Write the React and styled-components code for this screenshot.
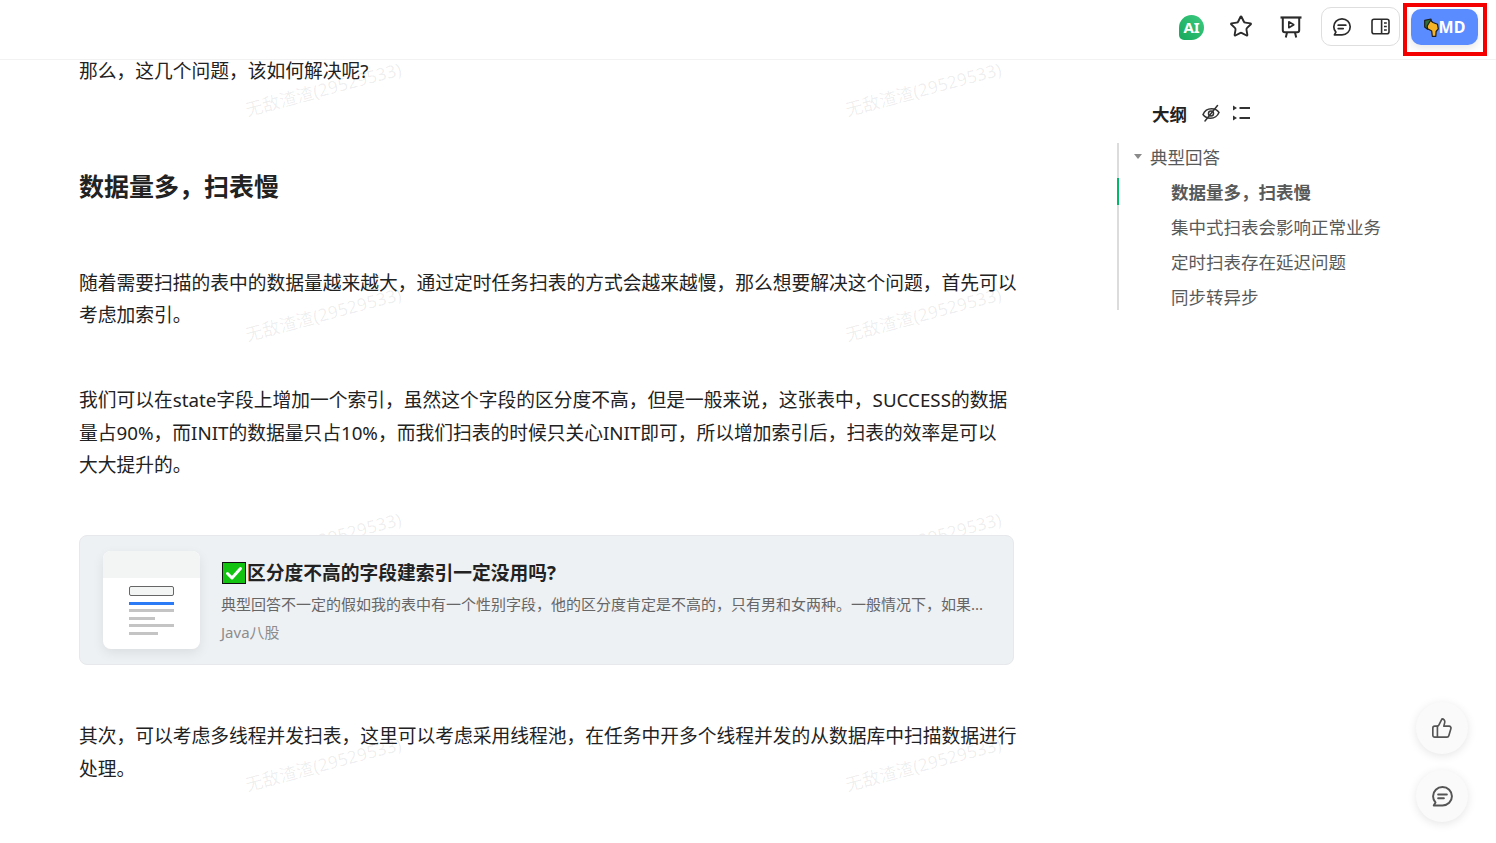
import React from "react";
import styled, { createGlobalStyle } from "styled-components";
import { Star, ThumbsUp } from "lucide-react";

const WATERMARK_COUNT = 8;

const outline = [
  { text: "集中式扫表会影响正常业务" },
  { text: "定时扫表存在延迟问题" },
  { text: "同步转异步" },
];

const BubbleIcon = ({ size = 20, color = "#2b2b2b" }) => (
  <svg width={size} height={size} viewBox="0 0 20 20" fill="none">
    <path
      d="M10 1.8c4.600 0 8.200 3.500 8.200 8s-3.600 8-8.200 8H2.400l1.500-2.600C2.600 13.800 1.800 12 1.800 9.800c0-4.500 3.600-8 8.200-8Z"
      stroke={color}
      strokeWidth="1.700"
      strokeLinejoin="round"
    />
    <path d="M6.200 8.200h7.600M6.200 11.600h5" stroke={color} strokeWidth="1.700" strokeLinecap="round" />
  </svg>
);

const PanelIcon = () => (
  <svg width="19" height="17" viewBox="0 0 19 17" fill="none">
    <rect x="1" y="1.200" width="17" height="14.600" rx="2" stroke="#2b2b2b" strokeWidth="1.600" />
    <path d="M10.600 1.200v14.600" stroke="#2b2b2b" strokeWidth="1.600" />
    <path d="M13 5h2.800M13 8.500h2.800M13 12h2.800" stroke="#2b2b2b" strokeWidth="1.600" />
  </svg>
);

const ScreenIcon = () => (
  <svg width="22" height="22" viewBox="0 0 22 22" fill="none">
    <path d="M.5 1.500h21" stroke="#2b2b2b" strokeWidth="2.200" />
    <path d="M2.800 1.500v12.700c0 1.200.8 2 2 2h12.400c1.200 0 2-.8 2-2V1.500" stroke="#2b2b2b" strokeWidth="2" />
    <path d="M8.800 5.800v6l5-3-5-3Z" stroke="#2b2b2b" strokeWidth="1.600" strokeLinejoin="round" />
    <path d="M7 16.500 5.800 21.500M15 16.500l1.200 5" stroke="#2b2b2b" strokeWidth="2" />
  </svg>
);

const EyeOffIcon = () => (
  <svg width="18" height="18" viewBox="0 0 18 18" fill="none">
    <path
      d="M1 10.500C2.500 7 5.500 4.800 9.500 4.800c3 0 5.800 1.200 7.500 3.700-1.500 3.500-4.500 5.700-8.500 5.700-3 0-5.800-1.200-7.500-3.700Z"
      stroke="#333"
      strokeWidth="1.500"
    />
    <circle cx="9" cy="9.500" r="2.500" stroke="#333" strokeWidth="1.500" />
    <path d="M15.500 1.500 3 17" stroke="#333" strokeWidth="1.500" strokeLinecap="round" />
  </svg>
);

const ListIcon = () => (
  <svg width="17" height="16" viewBox="0 0 17 16" fill="#333">
    <path d="M0 .5 4 3 0 5.500ZM0 10.500 4 13l-4 2.500Z" />
    <path d="M6.500 3H17M6.500 13H17" stroke="#333" strokeWidth="1.800" />
  </svg>
);

const HandIcon = () => (
  <svg width="15" height="19" viewBox="0 0 15 19">
    <path d="M.7 2.300 7 1l1.500 9-5 1.200L.7 9Z" fill="#2f6e3a" stroke="#1d1d1d" strokeWidth="1.200" strokeLinejoin="round" />
    <path
      d="M6.500 2.500 9 4.500l4.500 1.800.8 4.500-2.200 2.700-.3 4.800H8.300L7.700 13 3.600 10.800 3.200 8Z"
      fill="#f5b32a"
      stroke="#1d1d1d"
      strokeWidth="1.200"
      strokeLinejoin="round"
    />
  </svg>
);

const CheckMark = () => (
  <svg width="24" height="22" viewBox="0 0 24 22">
    <rect x=".5" y=".5" width="23" height="21" fill="#12c40f" stroke="#101010" />
    <path d="M5.500 11.500 10 16l8.500-9.500" fill="none" stroke="#fff" strokeWidth="3" strokeLinecap="round" strokeLinejoin="round" />
  </svg>
);

const App = () => (
  <Page>
    <GlobalStyle />
    <Header>
      <AiBadge>AI</AiBadge>
      <StarButton>
        <Star size={25} color="#2b2b2b" strokeWidth={1.9} />
      </StarButton>
      <ScreenButton>
        <ScreenIcon />
      </ScreenButton>
      <ToolGroup>
        <BubbleIcon />
        <PanelIcon />
      </ToolGroup>
      <Highlight>
        <MdButton>
          <HandIcon />
          MD
        </MdButton>
      </Highlight>
    </Header>

    <Watermarks>
      {Array.from({ length: WATERMARK_COUNT }, (_, i) => (
        <Watermark key={i}>无敌渣渣(29529533)</Watermark>
      ))}
    </Watermarks>

    <Body>
      <Article>
        <Para>那么，这几个问题，该如何解决呢?</Para>
        <Heading>数据量多，扫表慢</Heading>
        <Para $top={63}>
          随着需要扫描的表中的数据量越来越大，通过定时任务扫表的方式会越来越慢，那么想要解决这个问题，首先可以
          <br />
          考虑加索引。
        </Para>
        <Para $top={52}>
          我们可以在state字段上增加一个索引，虽然这个字段的区分度不高，但是一般来说，这张表中，SUCCESS的数据
          <br />
          量占90%，而INIT的数据量只占10%，而我们扫表的时候只关心INIT即可，所以增加索引后，扫表的效率是可以
          <br />
          大大提升的。
        </Para>
        <Card>
          <Thumb>
            <ThumbTop />
            <ThumbBody>
              <ThumbField />
              <ThumbLine $color="#2b7bf6" $width={45} />
              <ThumbLine $width={45} />
              <ThumbLine $width={26} />
              <ThumbLine $width={45} />
              <ThumbLine $width={29} />
            </ThumbBody>
          </Thumb>
          <CardText>
            <CardTitle>
              <CheckMark />
              区分度不高的字段建索引一定没用吗?
            </CardTitle>
            <CardDesc>
              典型回答不一定的假如我的表中有一个性别字段，他的区分度肯定是不高的，只有男和女两种。一般情况下，如果...
            </CardDesc>
            <CardSource>Java八股</CardSource>
          </CardText>
        </Card>
        <Para $top={55}>
          其次，可以考虑多线程并发扫表，这里可以考虑采用线程池，在任务中开多个线程并发的从数据库中扫描数据进行
          <br />
          处理。
        </Para>
      </Article>

      <Aside>
        <OutlineHead>
          <OutlineTitle>大纲</OutlineTitle>
          <EyeOffIcon />
          <ListIcon />
        </OutlineHead>
        <OutlineList>
          <OutlineRow $level={0}>
            <Caret />
            典型回答
          </OutlineRow>
          <OutlineRow $level={1} $active>
            数据量多，扫表慢
          </OutlineRow>
          {outline.map((item) => (
            <OutlineRow key={item.text} $level={1}>
              {item.text}
            </OutlineRow>
          ))}
        </OutlineList>
      </Aside>
    </Body>

    <FloatStack>
      <FloatButton>
        <ThumbsUp size={22} color="#555" strokeWidth={1.8} />
      </FloatButton>
      <FloatButton>
        <BubbleIcon size={23} color="#555" />
      </FloatButton>
    </FloatStack>
  </Page>
);

const GlobalStyle = createGlobalStyle`
  html, body {
    margin: 0;
    background: #fff;
  }
  body {
    font-family: "Noto Sans", "Noto Sans CJK SC", sans-serif;
  }
`;

const Page = styled.div`
  position: relative;
  height: 100vh;
  overflow: hidden;
  color: #222;
`;

const Header = styled.header`
  position: relative;
  z-index: 2;
  height: 60px;
  box-sizing: border-box;
  display: flex;
  align-items: center;
  justify-content: flex-end;
  padding: 0 9px 6px 0;
  background: #fff;
  border-bottom: 1px solid #f2f2f2;
`;

const AiBadge = styled.div`
  width: 25px;
  height: 25px;
  margin: 1px 25px 0 0;
  display: flex;
  align-items: center;
  justify-content: center;
  border-radius: 50% 50% 50% 5px;
  background: linear-gradient(45deg, #17a85c, #3ccb80);
  color: #fff;
  font: 700 15px "Noto Sans", sans-serif;
`;

const StarButton = styled.div`
  width: 24px;
  margin-right: 27px;
  display: flex;
  justify-content: center;
`;

const ScreenButton = styled.div`
  width: 22px;
  height: 22px;
  margin-right: 19px;
`;

const ToolGroup = styled.div`
  width: 79px;
  height: 39px;
  box-sizing: border-box;
  margin-right: 3px;
  display: flex;
  align-items: center;
  justify-content: center;
  gap: 19px;
  border: 1px solid #dedede;
  border-radius: 10px;
`;

const Highlight = styled.div`
  box-sizing: border-box;
  width: 84px;
  height: 53px;
  margin-top: 6px;
  padding: 2px 5px 0 4px;
  border: 4px solid #f40000;
`;

const MdButton = styled.div`
  height: 36px;
  display: flex;
  align-items: center;
  justify-content: center;
  border-radius: 10px;
  background: #5b8cff;
  box-shadow: 0 3px 8px rgba(0, 0, 0, 0.1);
  color: #fff;
  font: 700 16px "Noto Sans", sans-serif;
`;

const Watermarks = styled.div`
  position: absolute;
  z-index: 0;
  top: -24px;
  left: 23px;
  display: grid;
  grid-template-columns: repeat(2, 600px);
  grid-auto-rows: 225px;
  pointer-events: none;
`;

const Watermark = styled.div`
  width: 600px;
  display: flex;
  align-items: center;
  justify-content: center;
  transform: rotate(-15deg);
  color: rgba(0, 0, 0, 0.07);
  font-size: 17.5px;
  white-space: nowrap;
`;

const Body = styled.main`
  position: relative;
  z-index: 1;
  display: grid;
  grid-template-columns: 1117px 1fr;
`;

const Article = styled.article`
  margin-top: -5px;
  padding-left: 79px;
`;

const Para = styled.p`
  margin: ${(p) => p.$top || 0}px 0 0;
  font-size: 18.75px;
  line-height: 32.67px;
  white-space: nowrap;
`;

const Heading = styled.h2`
  margin: 80px 0 0;
  font-size: 25px;
  line-height: 36px;
  font-weight: 700;
`;

const Card = styled.div`
  width: 935px;
  height: 130px;
  box-sizing: border-box;
  margin-top: 53px;
  padding: 15px 23px;
  display: flex;
  gap: 21px;
  background: #eef1f4;
  border: 1px solid #e6e8eb;
  border-radius: 8px;
`;

const Thumb = styled.div`
  width: 97px;
  height: 98px;
  flex: none;
  display: flex;
  flex-direction: column;
  overflow: hidden;
  background: #fff;
  border-radius: 8px;
  box-shadow: 0 4px 12px rgba(0, 0, 0, 0.08);
`;

const ThumbTop = styled.div`
  height: 27px;
  background: #f3f5f5;
`;

const ThumbBody = styled.div`
  padding: 8px 0 0 26px;
  display: flex;
  flex-direction: column;
  gap: 4.5px;
`;

const ThumbField = styled.div`
  width: 45px;
  height: 10px;
  box-sizing: border-box;
  margin-bottom: 1px;
  background: #f3f4f4;
  border: 1px solid #666;
  border-radius: 2px;
`;

const ThumbLine = styled.div`
  width: ${(p) => p.$width}px;
  height: 3px;
  background: ${(p) => p.$color || "#c4c4c4"};
`;

const CardText = styled.div`
  min-width: 0;
  padding-top: 9px;
`;

const CardTitle = styled.div`
  display: flex;
  align-items: center;
  gap: 1px;
  font-size: 18.75px;
  line-height: 26px;
  font-weight: 700;
  white-space: nowrap;
  svg {
    flex: none;
    margin-left: 1px;
  }
`;

const CardDesc = styled.div`
  margin-top: 7px;
  font-size: 15px;
  line-height: 22px;
  color: #666;
  white-space: nowrap;
`;

const CardSource = styled.div`
  margin-top: 6px;
  font-size: 15px;
  line-height: 22px;
  color: #8c8c8c;
`;

const Aside = styled.aside`
  padding-top: 39px;
`;

const OutlineHead = styled.div`
  height: 28px;
  padding-left: 35px;
  display: flex;
  align-items: center;
  gap: 15px;
  svg:last-child {
    margin-left: -2px;
  }
`;

const OutlineTitle = styled.div`
  font-size: 17.5px;
  font-weight: 700;
`;

const OutlineList = styled.div`
  width: 300px;
  margin-top: 16px;
  display: flex;
  flex-direction: column;
  gap: 8px;
  border-left: 2px solid #dcdcdc;
`;

const OutlineRow = styled.div`
  position: relative;
  height: 27px;
  display: flex;
  align-items: center;
  margin-left: -2px;
  padding-left: ${(p) => (p.$level ? 52 : 31)}px;
  border-left: 2px solid ${(p) => (p.$active ? "#00b96b" : "transparent")};
  font-size: 17.5px;
  font-weight: ${(p) => (p.$active ? 700 : 400)};
  color: #585a5a;
`;

const Caret = styled.span`
  position: absolute;
  left: 15px;
  top: 11px;
  border: 4.5px solid transparent;
  border-top: 5px solid #8a8a8a;
  border-bottom: 0;
`;

const FloatStack = styled.div`
  position: absolute;
  z-index: 3;
  right: 28px;
  bottom: 21px;
  display: flex;
  flex-direction: column;
  gap: 16px;
`;

const FloatButton = styled.div`
  width: 52px;
  height: 52px;
  display: flex;
  align-items: center;
  justify-content: center;
  border-radius: 50%;
  background: #fafafa;
  box-shadow: 0 2px 10px rgba(0, 0, 0, 0.1);
`;

export default App;
